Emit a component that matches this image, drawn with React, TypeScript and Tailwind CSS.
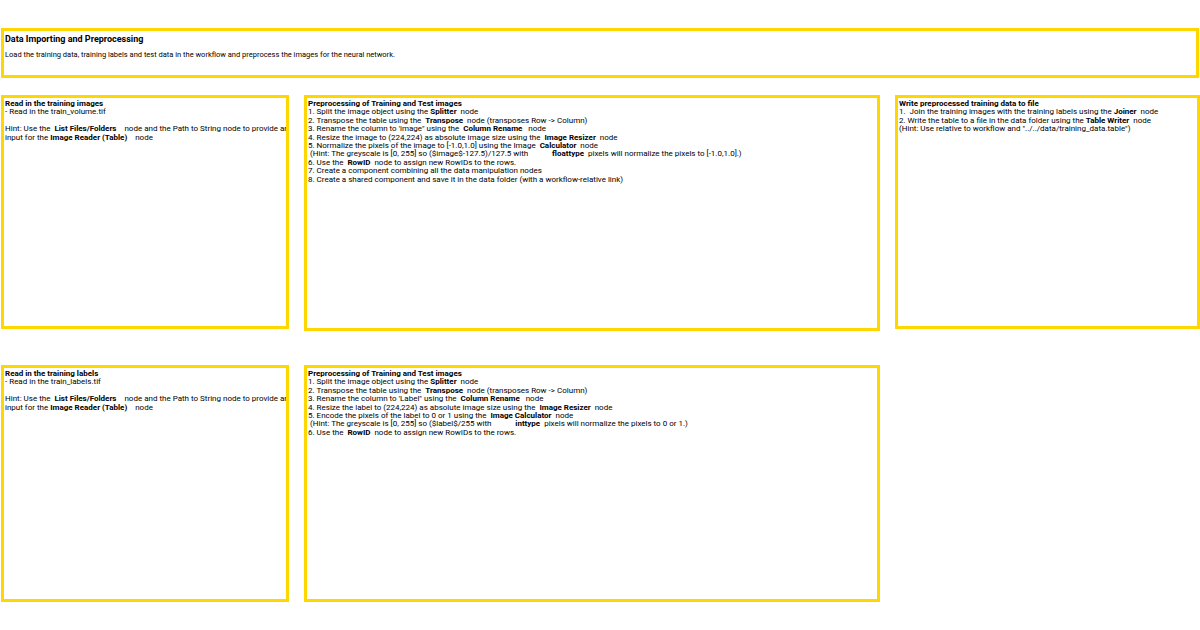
import React from "react";

const B = ({ children }: { children: React.ReactNode }) => <b className="font-bold">{children}</b>;

function Box({ x, y, w, h, children }: { x: number; y: number; w: number; h: number; children: React.ReactNode }) {
  return (
    <div
      className="absolute border-[3px] border-[#ffd700] bg-white text-[8px] leading-[8.4px] text-black whitespace-pre px-[1px] pt-[2px] overflow-hidden"
      style={{ left: x, top: y, width: w, height: h }}
    >
      {children}
    </div>
  );
}

export default function App() {
  return (
    <div className="relative w-[1200px] h-[630px] bg-white overflow-hidden" style={{ fontFamily: "Roboto, 'Liberation Sans', sans-serif" }}>
      <Box x={1} y={28} w={1198} h={50}>
        <div className="text-[9px] font-bold leading-[11px] pt-[1px]">Data Importing and Preprocessing</div>
        <div className="mt-[6px] text-[7.5px]">Load the training data, training labels and test data in the workflow and preprocess the images for the neural network.</div>
      </Box>
      <Box x={1} y={95} w={288} h={234}>
        <div className="font-bold">Read in the training images</div>
        <div>- Read in the train_volume.tif</div>
        <div>{" "}</div>
        <div>Hint: Use the  <B>List Files/Folders</B>    node and the Path to String node to provide an</div>
        <div>input for the <B>Image Reader (Table)</B>    node</div>
      </Box>
      <Box x={304} y={95} w={576} h={236}>
        <div className="font-bold">Preprocessing of Training and Test images</div>
        <div>1. Split the image object using the <B>Splitter</B>  node</div>
        <div>2. Transpose the table using the  <B>Transpose</B>  node (transposes Row -{">"} Column)</div>
        <div>3. Rename the column to 'image" using the  <B>Column Rename</B>   node</div>
        <div>4. Resize the image to (224,224) as absolute image size using the  <B>Image Resizer</B>  node</div>
        <div>5. Normalize the pixels of the image to [-1.0,1.0] using the Image  <B>Calculator</B>  node</div>
        <div> (Hint: The greyscale is [0, 255] so ($image$-127.5)/127.5 with            <B>floattype</B>  pixels will normalize the pixels to [-1.0,1.0].)</div>
        <div>6. Use the  <B>RowID</B>  node to assign new RowIDs to the rows.</div>
        <div>7. Create a component combining all the data manipulation nodes</div>
        <div>8. Create a shared component and save it in the data folder (with a workflow-relative link)</div>
      </Box>
      <Box x={895} y={95} w={305} h={234}>
        <div className="font-bold">Write preprocessed training data to file</div>
        <div>1.  Join the training images with the training labels using the <B>Joiner</B>  node</div>
        <div>2. Write the table to a file in the data folder using the <B>Table Writer</B>  node</div>
        <div>(Hint: Use relative to workflow and "../../data/training_data.table")</div>
      </Box>
      <Box x={1} y={365} w={288} h={237}>
        <div className="font-bold">Read in the training labels</div>
        <div>- Read in the train_labels.tif</div>
        <div>{" "}</div>
        <div>Hint: Use the  <B>List Files/Folders</B>    node and the Path to String node to provide an</div>
        <div>input for the <B>Image Reader (Table)</B>    node</div>
      </Box>
      <Box x={304} y={365} w={576} h={237}>
        <div className="font-bold">Preprocessing of Training and Test images</div>
        <div>1. Split the image object using the <B>Splitter</B>  node</div>
        <div>2. Transpose the table using the  <B>Transpose</B>  node (transposes Row -{">"} Column)</div>
        <div>3. Rename the column to 'Label" using the  <B>Column Rename</B>   node</div>
        <div>4. Resize the label to (224,224) as absolute image size using the  <B>Image Resizer</B>  node</div>
        <div>5. Encode the pixels of the label to 0 or 1 using the  <B>Image Calculator</B>  node</div>
        <div> (Hint: The greyscale is [0, 255] so ($label$/255 with            <B>inttype</B>  pixels will normalize the pixels to 0 or 1.)</div>
        <div>6. Use the  <B>RowID</B>  node to assign new RowIDs to the rows.</div>
      </Box>
    </div>
  );
}
